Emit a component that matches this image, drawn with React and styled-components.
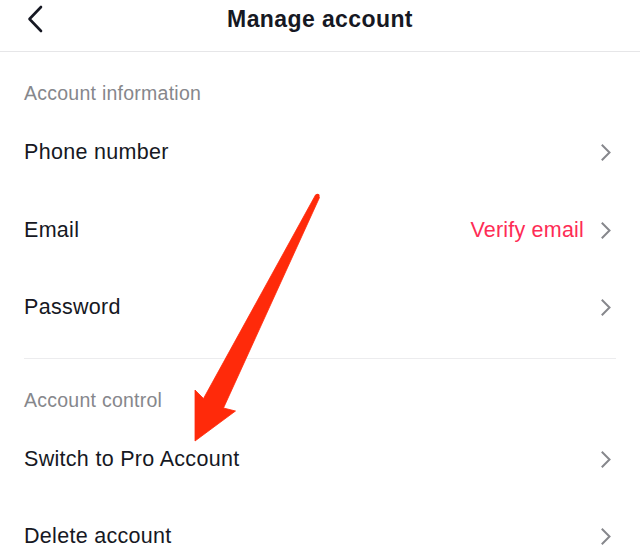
import React from "react";
import styled, { createGlobalStyle } from "styled-components";

const GlobalStyle = createGlobalStyle`
  html, body {
    margin: 0;
    padding: 0;
    background: #ffffff;
  }
  body {
    font-family: "Liberation Sans", Arial, sans-serif;
    color: #161823;
  }
`;

const Page = styled.div`
  position: relative;
  width: 640px;
  height: 557px;
  overflow: hidden;
  background: #fff;
`;

const Header = styled.div`
  height: 51px;
  border-bottom: 1px solid #e6e6e8;
  display: flex;
  align-items: center;
  justify-content: center;
  position: relative;
`;

const BackButton = styled.div`
  position: absolute;
  left: 25px;
  top: 5px;
  width: 20px;
  height: 28px;
  display: flex;
  align-items: center;
  justify-content: center;
`;

const Title = styled.h1`
  margin: -13px 0 0;
  font-size: 23px;
  font-weight: 700;
  letter-spacing: 0.4px;
  line-height: 36px;
  color: #161823;
`;

const Section = styled.div`
  padding-top: 29px;
`;

const SectionLabel = styled.div`
  padding: 0 24px;
  font-size: 19.5px;
  letter-spacing: 0.25px;
  line-height: 24px;
  color: #86878c;
  margin-bottom: 8px;
`;

const Row = styled.div`
  height: 77.5px;
  box-sizing: border-box;
  padding: 2px 29px 0 24px;
  display: flex;
  align-items: center;
  justify-content: space-between;
`;

const RowLabel = styled.span`
  font-size: 21.5px;
  letter-spacing: 0.3px;
  color: #161823;
`;

const RowRight = styled.div`
  display: flex;
  align-items: center;
  gap: 17px;
`;

const Hint = styled.span`
  font-size: 21.5px;
  letter-spacing: 0.2px;
  color: #fe2c55;
`;

const Divider = styled.div`
  margin: 12px 24px 0;
  height: 1px;
  background: #ececee;
`;

const ArrowLayer = styled.svg`
  position: absolute;
  left: 0;
  top: 0;
  pointer-events: none;
`;

const Chevron = () => (
  <svg width="10" height="17" viewBox="0 0 10 17">
    <path d="M1.5 1.5 L8.5 8.5 L1.5 15.5" fill="none" stroke="#86878c" strokeWidth="2" strokeLinecap="square" />
  </svg>
);

const items = [
  {
    title: "Account information",
    rows: [
      { label: "Phone number" },
      { label: "Email", hint: "Verify email" },
      { label: "Password" },
    ],
  },
  {
    title: "Account control",
    rows: [{ label: "Switch to Pro Account" }, { label: "Delete account" }],
  },
];

export default function App() {
  return (
    <Page>
      <GlobalStyle />
      <Header>
        <BackButton>
          <svg width="18" height="28" viewBox="0 0 18 28">
            <path d="M15 2 L3.5 14 L15 26" fill="none" stroke="#161823" strokeWidth="2.6" strokeLinecap="round" strokeLinejoin="round" />
          </svg>
        </BackButton>
        <Title>Manage account</Title>
      </Header>
      {items.map((section, i) => (
        <React.Fragment key={section.title}>
          {i > 0 && <Divider />}
          <Section>
            <SectionLabel>{section.title}</SectionLabel>
            {section.rows.map((row) => (
              <Row key={row.label}>
                <RowLabel>{row.label}</RowLabel>
                <RowRight>
                  {row.hint && <Hint>{row.hint}</Hint>}
                  <Chevron />
                </RowRight>
              </Row>
            ))}
          </Section>
        </React.Fragment>
      ))}
      <ArrowLayer width="640" height="557" viewBox="0 0 640 557">
        <path
          d="M315.5 195 L319.5 197.5 L223.5 408 L235.5 411 L195 441 L195 390 L203.5 398.5 Z"
          fill="#ff2a0a"
          stroke="#ff2a0a"
          strokeWidth="0.8"
          strokeLinejoin="round"
        />
        <circle cx="317.5" cy="196" r="2.2" fill="#ff2a0a" />
      </ArrowLayer>
    </Page>
  );
}
